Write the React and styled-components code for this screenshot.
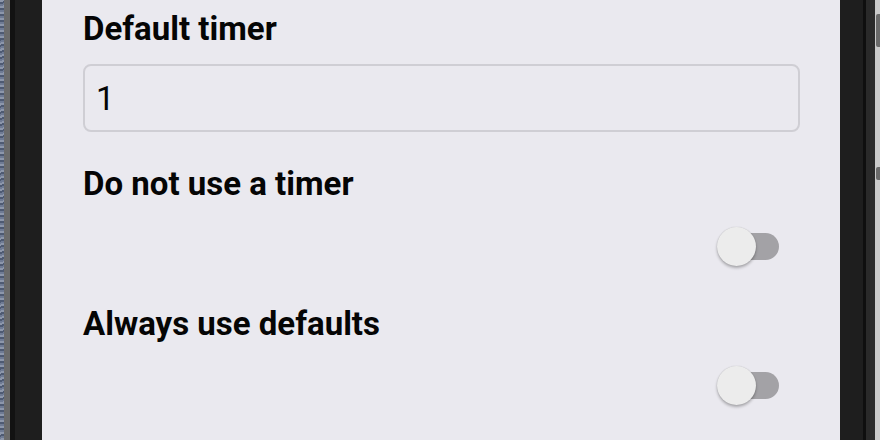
import React, { useState } from 'react';
import styled, { createGlobalStyle } from 'styled-components';

const GlobalStyle = createGlobalStyle`
  html, body {
    margin: 0;
    padding: 0;
    width: 880px;
    height: 440px;
    overflow: hidden;
    background: #1e1e1e;
  }
  * { box-sizing: border-box; }
`;

const Frame = styled.div`
  display: flex;
  width: 880px;
  height: 440px;
`;

// slice of the table / background showing past the phone
const Denim = styled.div`
  width: 4px;
  background:
    repeating-linear-gradient(170deg, #8d97ab 0 2px, #4e5a72 2px 4px, #6f7b94 4px 6px);
`;

const Strip = styled.div`
  position: relative;
  width: ${p => p.w}px;
  background: ${p => p.c};
`;

const SideButton = styled.div`
  position: absolute;
  right: 0;
  top: ${p => p.top}px;
  width: 4px;
  height: ${p => p.h}px;
  background: #6a6a6a;
  border-radius: 2px 0 0 2px;
`;

const Screen = styled.div`
  flex: 1;
  background: #eae9ef;
  padding: 9px 40px 0 41px;
  font-family: Roboto, "Noto Sans", Arial, sans-serif;
  color: #050505;
`;

const Label = styled.div`
  font-size: 33px;
  font-weight: 700;
  line-height: 40px;
  margin: ${p => p.mt || 0}px 0 0 0;
`;

const Field = styled.input`
  display: block;
  width: 100%;
  height: 68px;
  margin-top: 15px;
  padding: 0 11px;
  background: #eae9ef;
  border: 2px solid #cfced4;
  border-radius: 8px;
  font-family: inherit;
  font-size: 33px;
  color: #050505;
  outline: none;
`;

const SwitchRow = styled.div`
  display: flex;
  justify-content: flex-end;
  padding-right: 21px;
  margin-top: ${p => p.mt}px;
`;

const Track = styled.button`
  position: relative;
  width: 58px;
  height: 27px;
  padding: 0;
  border: none;
  border-radius: 14px;
  background: ${p => (p.on ? '#8fb3e8' : '#a3a2a6')};
  cursor: pointer;
`;

const Thumb = styled.span`
  position: absolute;
  top: 50%;
  left: ${p => (p.on ? '35px' : '-4px')};
  width: 39px;
  height: 39px;
  margin-top: -20px;
  border-radius: 50%;
  background: ${p => (p.on ? '#2f6fd6' : '#ececec')};
  box-shadow: 0 2px 3px rgba(0, 0, 0, 0.28), 0 0 1px rgba(0, 0, 0, 0.2);
`;

function Switch({ on, onToggle }) {
  return (
    <Track on={on ? 1 : 0} onClick={onToggle}>
      <Thumb on={on ? 1 : 0} />
    </Track>
  );
}

export default function App() {
  const [timer, setTimer] = useState('1');
  const [noTimer, setNoTimer] = useState(false);
  const [defaults, setDefaults] = useState(false);

  return (
    <>
      <GlobalStyle />
      <Frame>
        <Denim />
        <Strip w={6} c="#6b6b6b" />
        <Strip w={5} c="#121212" />
        <Strip w={27} c="#1e1e1e" />
        <Screen>
          <Label>Default timer</Label>
          <Field value={timer} onChange={e => setTimer(e.target.value)} />
          <Label mt={32}>Do not use a timer</Label>
          <SwitchRow mt={29}>
            <Switch on={noTimer} onToggle={() => setNoTimer(!noTimer)} />
          </SwitchRow>
          <Label mt={44}>Always use defaults</Label>
          <SwitchRow mt={28}>
            <Switch on={defaults} onToggle={() => setDefaults(!defaults)} />
          </SwitchRow>
        </Screen>
        <Strip w={23} c="#1e1e1e" />
        <Strip w={3} c="#0f0f0f" />
        <Strip w={9} c="#2a2a2a" />
        <Strip w={5} c="#cacaca">
          <SideButton top={14} h={33} />
          <SideButton top={167} h={13} />
        </Strip>
      </Frame>
    </>
  );
}
